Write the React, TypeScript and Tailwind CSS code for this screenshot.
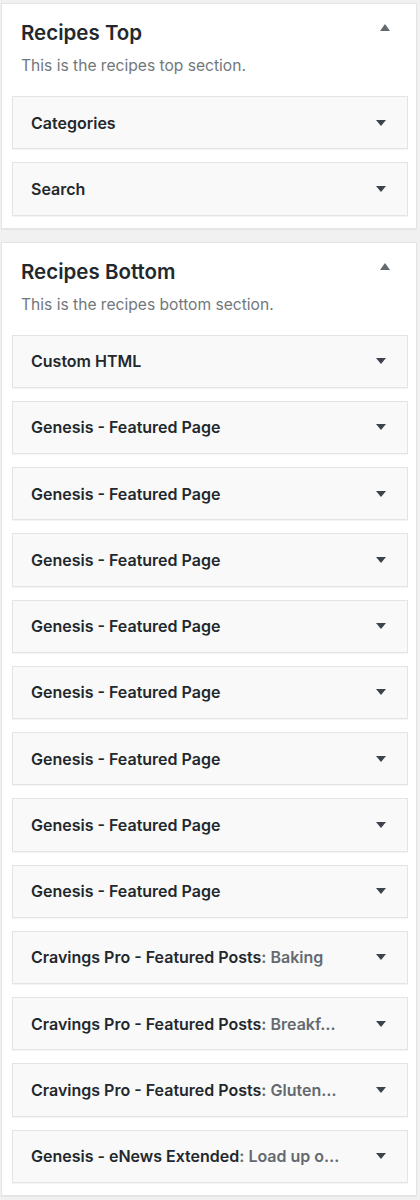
import React from 'react';

// Widget rows shown inside each sidebar area
interface WidgetItem {
  title: string;
  extra?: string;
}

interface Area {
  name: string;
  description: string;
  widgets: WidgetItem[];
}

const areas: Area[] = [
  {
    name: 'Recipes Top',
    description: 'This is the recipes top section.',
    widgets: [{ title: 'Categories' }, { title: 'Search' }],
  },
  {
    name: 'Recipes Bottom',
    description: 'This is the recipes bottom section.',
    widgets: [
      { title: 'Custom HTML' },
      { title: 'Genesis - Featured Page' },
      { title: 'Genesis - Featured Page' },
      { title: 'Genesis - Featured Page' },
      { title: 'Genesis - Featured Page' },
      { title: 'Genesis - Featured Page' },
      { title: 'Genesis - Featured Page' },
      { title: 'Genesis - Featured Page' },
      { title: 'Genesis - Featured Page' },
      { title: 'Cravings Pro - Featured Posts', extra: 'Baking' },
      { title: 'Cravings Pro - Featured Posts', extra: 'Breakf…' },
      { title: 'Cravings Pro - Featured Posts', extra: 'Gluten…' },
      { title: 'Genesis - eNews Extended', extra: 'Load up o…' },
    ],
  },
];

function ArrowDown() {
  return (
    <svg width="10" height="6" viewBox="0 0 10 6" className="shrink-0">
      <path d="M0 0 H10 L5 6 Z" fill="#3c434a" />
    </svg>
  );
}

function ArrowUp() {
  return (
    <svg width="10" height="7" viewBox="0 0 10 7" className="shrink-0">
      <path d="M5 0 L10 7 H0 Z" fill="#646970" />
    </svg>
  );
}

function WidgetRow({ item }: { item: WidgetItem }) {
  return (
    <div className="ml-[10px] flex h-[53.25px] w-[396px] items-center justify-between border border-[#e2e4e7] bg-[#f9f9f9] pl-[18px] pr-[21px] shadow-[0_1px_1px_rgba(0,0,0,0.04)]">
      <span className="whitespace-nowrap text-[16px] font-semibold leading-5 text-[#23282d]">
        {item.title}
        {item.extra && <span className="text-[#646970]">: {item.extra}</span>}
      </span>
      <ArrowDown />
    </div>
  );
}

function SidebarArea({ area }: { area: Area }) {
  return (
    <section className="ml-[1px] w-[416px] border border-[#e2e4e7] bg-white pb-[12px] shadow-[0_1px_1px_rgba(0,0,0,0.04)]">
      <div className="flex items-start justify-between pl-[19px] pr-[26px] pt-[15px]">
        <h2 className="text-[20.5px] font-semibold leading-7 text-[#23282d]">{area.name}</h2>
        <div className="pt-[5px]">
          <ArrowUp />
        </div>
      </div>
      <p className="mt-[9px] pl-[19px] text-[15.6px] leading-5 text-[#72777c]">{area.description}</p>
      <div className="mt-[20px] flex flex-col gap-[13px]">
        {area.widgets.map((w, i) => (
          <WidgetRow key={i} item={w} />
        ))}
      </div>
    </section>
  );
}

export default function App() {
  return (
    <div
      className="min-h-[1200px] w-[420px] bg-[#f1f1f1] pt-[3px]"
      style={{ fontFamily: 'Inter, "Noto Sans", sans-serif' }}
    >
      <div className="flex flex-col gap-[13px]">
        {areas.map((a) => (
          <SidebarArea key={a.name} area={a} />
        ))}
      </div>
    </div>
  );
}
